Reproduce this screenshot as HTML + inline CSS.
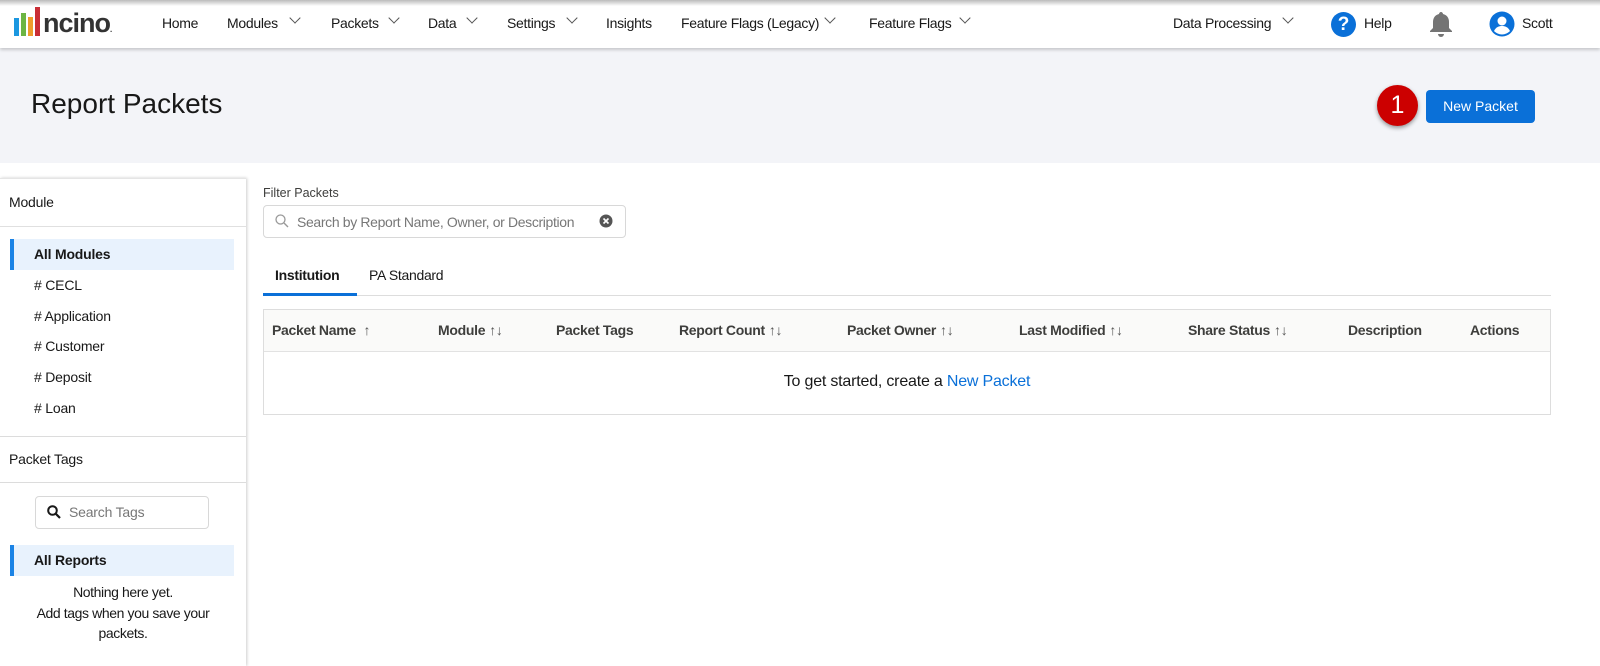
<!DOCTYPE html>
<html><head><meta charset="utf-8"><style>
*{box-sizing:border-box;margin:0;padding:0}
body{width:1600px;height:666px;overflow:hidden;background:#fff;font-family:"Liberation Sans",sans-serif;color:#181818;position:relative}
.a{position:absolute;white-space:nowrap}
.nav{position:absolute;left:0;top:0;width:1600px;height:48px;background:#fff;box-shadow:0 2px 3px rgba(0,0,0,.18);z-index:2}
.nav .t{position:absolute;top:15px;font-size:14px;letter-spacing:-0.3px;color:#181818}
.chev{position:absolute;top:14px;width:8px;height:8px;border-right:1.3px solid #555;border-bottom:1.3px solid #555;transform:rotate(45deg)}
.topfade{position:absolute;left:0;top:0;width:1600px;height:6px;background:linear-gradient(#bbb,#fff);z-index:3}
.hdr{position:absolute;left:0;top:48px;width:1600px;height:115px;background:#f3f4f8}
.side{position:absolute;left:0;top:178px;width:246px;height:488px;background:#fff;box-shadow:1px 0 3px rgba(0,0,0,.2);border-top:1px solid #e5e5e5}
.side .a{font-size:14px;letter-spacing:-0.2px}
.sel{position:absolute;left:10px;width:224px;height:31px;background:#e8f2fd;border-left:4px solid #1b83e5}
.th{position:absolute;top:322px;font-size:14px;font-weight:bold;color:#3e3e3c;letter-spacing:-0.3px}
.srt{font-weight:normal;font-size:14px;color:#555;margin-left:4px}
</style></head><body>
<div class="topfade"></div>
<div class="nav">
  <div class="a" style="left:14px;top:18px;width:5px;height:18px;background:#1b97e0"></div>
  <div class="a" style="left:21px;top:13px;width:5px;height:23px;background:#6cb543"></div>
  <div class="a" style="left:28px;top:17px;width:5px;height:19px;background:#ef9d2c"></div>
  <div class="a" style="left:35px;top:7px;width:5px;height:29px;background:#c92e36"></div>
  <div class="a" style="left:43px;top:8px;font-size:27px;font-weight:bold;color:#333;letter-spacing:-1px">ncino<span style="font-size:8px">.</span></div>
  <div class="t" style="left:162px">Home</div>
  <div class="t" style="left:227px">Modules</div><div class="chev" style="left:291px"></div>
  <div class="t" style="left:331px">Packets</div><div class="chev" style="left:390px"></div>
  <div class="t" style="left:428px">Data</div><div class="chev" style="left:468px"></div>
  <div class="t" style="left:507px">Settings</div><div class="chev" style="left:568px"></div>
  <div class="t" style="left:606px">Insights</div>
  <div class="t" style="left:681px">Feature Flags (Legacy)</div><div class="chev" style="left:826px"></div>
  <div class="t" style="left:869px">Feature Flags</div><div class="chev" style="left:961px"></div>
  <div class="t" style="left:1173px">Data Processing</div><div class="chev" style="left:1284px"></div>
  <div class="a" style="left:1331px;top:12px;width:25px;height:25px;border-radius:50%;background:#0a70d8;color:#fff;font-weight:bold;font-size:19px;text-align:center;line-height:25px">?</div>
  <div class="t" style="left:1364px">Help</div>
  <svg class="a" style="left:1429px;top:11px" width="24" height="26" viewBox="0 0 24 26"><path d="M12 1c-1 0-2 1-2 2C6 4 4 7 4 11v6l-3 3v1h22v-1l-3-3v-6c0-4-2-7-6-8 0-1-1-2-2-2z" fill="#747474"/><path d="M9 23h6a3 3 0 0 1-6 0z" fill="#747474"/></svg>
  <svg class="a" style="left:1489px;top:11px" width="26" height="26" viewBox="0 0 26 26"><circle cx="13" cy="13" r="12.5" fill="#0a70d8"/><circle cx="13" cy="10" r="4.5" fill="#fff"/><path d="M5 20c2-4 5-5 8-5s6 1 8 5c-2 2-5 3.5-8 3.5S7 22 5 20z" fill="#fff"/></svg>
  <div class="t" style="left:1522px">Scott</div>
</div>
<div class="hdr">
  <div class="a" style="left:31px;top:40px;font-size:28px;color:#181818">Report Packets</div>
  <div class="a" style="left:1377px;top:37px;width:41px;height:41px;border-radius:50%;background:#c00;color:#fff;font-size:25px;text-align:center;line-height:41px;box-shadow:0 2px 4px rgba(0,0,0,.4)">1</div>
  <div class="a" style="left:1426px;top:42px;width:109px;height:33px;border-radius:4px;background:#0a70d8;color:#fff;font-size:14px;text-align:center;line-height:33px">New Packet</div>
</div>
<div class="side">
  <div class="a" style="left:9px;top:15px">Module</div>
  <div class="a" style="left:0;top:47px;width:246px;height:1px;background:#e0e0e0"></div>
  <div class="sel" style="top:60px"></div>
  <div class="a" style="left:34px;top:67px;font-weight:bold">All Modules</div>
  <div class="a" style="left:34px;top:98px"># CECL</div>
  <div class="a" style="left:34px;top:129px"># Application</div>
  <div class="a" style="left:34px;top:159px"># Customer</div>
  <div class="a" style="left:34px;top:190px"># Deposit</div>
  <div class="a" style="left:34px;top:221px"># Loan</div>
  <div class="a" style="left:0;top:257px;width:246px;height:1px;background:#dcdcdc"></div>
  <div class="a" style="left:9px;top:272px">Packet Tags</div>
  <div class="a" style="left:0;top:303px;width:246px;height:1px;background:#dcdcdc"></div>
  <div class="a" style="left:35px;top:317px;width:174px;height:33px;border:1px solid #d8d8d8;border-radius:4px"></div>
  <svg class="a" style="left:47px;top:326px" width="14" height="14" viewBox="0 0 14 14"><circle cx="5.5" cy="5.5" r="4.3" fill="none" stroke="#181818" stroke-width="2"/><path d="M8.7 8.7 13 13" stroke="#181818" stroke-width="2.2"/></svg>
  <div class="a" style="left:69px;top:325px;color:#777">Search Tags</div>
  <div class="sel" style="top:366px"></div>
  <div class="a" style="left:34px;top:373px;font-weight:bold">All Reports</div>
  <div class="a" style="left:0;top:403px;width:246px;text-align:center;line-height:20.5px;white-space:normal;padding:0 20px;letter-spacing:-0.4px">Nothing here yet.<br>Add tags when you save your packets.</div>
</div>
<div class="a" style="left:263px;top:186px;font-size:12.5px;color:#3e3e3c">Filter Packets</div>
<div class="a" style="left:263px;top:205px;width:363px;height:33px;border:1px solid #d8d8d8;border-radius:4px"></div>
<svg class="a" style="left:275px;top:214px" width="14" height="14" viewBox="0 0 14 14"><circle cx="5.5" cy="5.5" r="4.5" fill="none" stroke="#999" stroke-width="1.3"/><path d="M9 9 13 13" stroke="#999" stroke-width="1.4"/></svg>
<div class="a" style="left:297px;top:214px;font-size:14px;letter-spacing:-0.35px;color:#777">Search by Report Name, Owner, or Description</div>
<svg class="a" style="left:599px;top:214px" width="14" height="14" viewBox="0 0 14 14"><circle cx="7" cy="7" r="6.5" fill="#555"/><path d="M4.5 4.5l5 5M9.5 4.5l-5 5" stroke="#fff" stroke-width="1.6"/></svg>
<div class="a" style="left:275px;top:267px;font-size:14px;font-weight:bold;letter-spacing:-0.3px">Institution</div>
<div class="a" style="left:369px;top:267px;font-size:14px;letter-spacing:-0.3px">PA Standard</div>
<div class="a" style="left:263px;top:295px;width:1288px;height:1px;background:#ddd"></div>
<div class="a" style="left:263px;top:293px;width:94px;height:3px;background:#0a70d8"></div>
<div class="a" style="left:263px;top:309px;width:1288px;height:106px;border:1px solid #ddd"></div>
<div class="a" style="left:264px;top:310px;width:1286px;height:42px;background:#fafaf9;border-bottom:1px solid #e2e2e2"></div>
<div class="th" style="left:272px">Packet Name <span class="srt" style="font-weight:bold">↑</span></div>
<div class="th" style="left:438px">Module<span class="srt">↑↓</span></div>
<div class="th" style="left:556px">Packet Tags</div>
<div class="th" style="left:679px">Report Count<span class="srt">↑↓</span></div>
<div class="th" style="left:847px">Packet Owner<span class="srt">↑↓</span></div>
<div class="th" style="left:1019px">Last Modified<span class="srt">↑↓</span></div>
<div class="th" style="left:1188px">Share Status<span class="srt">↑↓</span></div>
<div class="th" style="left:1348px">Description</div>
<div class="th" style="left:1470px">Actions</div>
<div class="a" style="left:263px;top:373px;width:1288px;text-align:center;font-size:16px;letter-spacing:-0.2px">To get started, create a <span style="color:#0a70d8">New Packet</span></div>
</body></html>
